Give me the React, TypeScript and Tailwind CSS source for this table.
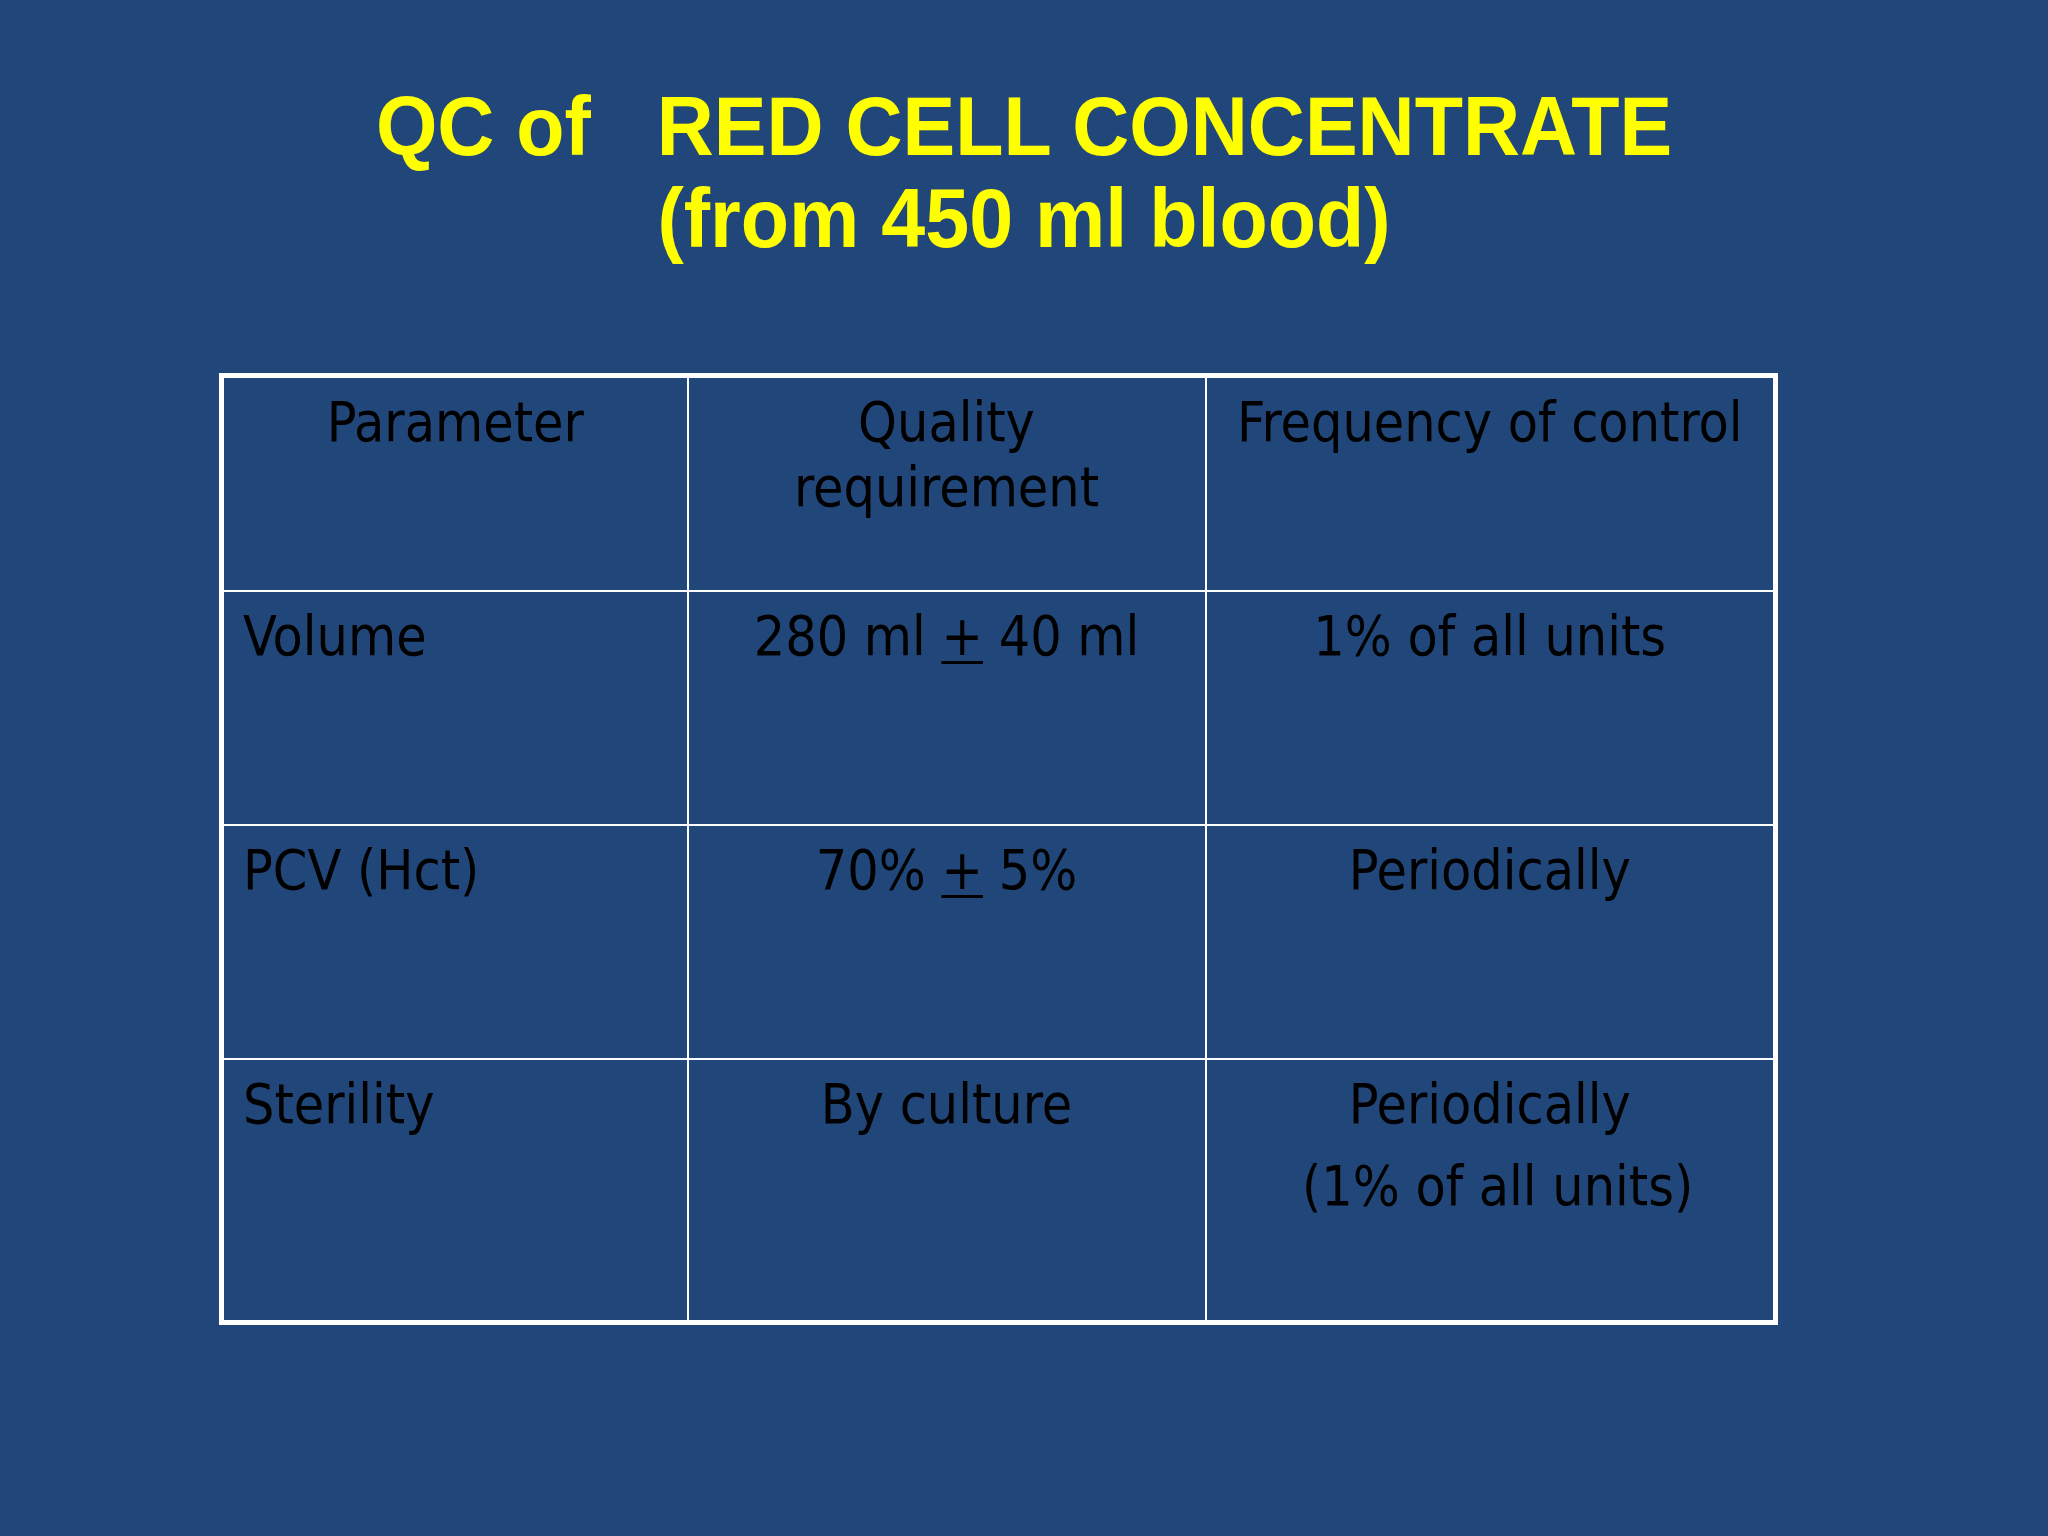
const rows = [
  { param: 'Volume', req: ['280 ml ', '+', ' 40 ml'], freq: ['1% of all units'], h: 'h-[234px]' },
  { param: 'PCV (Hct)', req: ['70% ', '+', ' 5%'], freq: ['Periodically'], h: 'h-[234px]' },
  { param: 'Sterility', req: ['By culture'], freq: ['Periodically', '\u00a0(1% of all units)'], h: 'h-[264px]' },
];

const cell = 'border-2 border-white align-top pt-[12px] px-[19px]';

const App = () => {
  return (
    <div className="w-[2048px] h-[1536px] bg-[#21477a] pt-[85px] font-['Liberation_Sans',Arial,sans-serif]">
      <h1 className="text-center text-[79px] leading-[87px] font-bold text-[#ffff00] whitespace-pre scale-y-[1.05]">
        {'QC of   RED CELL CONCENTRATE'}
        <br />
        {'(from 450 ml blood)'}
      </h1>

      <table className="ml-[219px] mt-[114px] border-collapse border-[5px] border-white text-black text-[55px] leading-[65px] font-['DejaVu_Sans_Condensed','DejaVu_Sans',sans-serif] [font-stretch:condensed]">
        <tbody>
          <tr className="h-[215px]">
            <td className={`${cell} w-[466px] text-center pt-[8px]`}>Parameter</td>
            <td className={`${cell} w-[518px] text-center pt-[8px]`}>
              Quality
              <br />
              requirement
            </td>
            <td className={`${cell} w-[570px] text-center pt-[8px] whitespace-nowrap`}>Frequency of control</td>
          </tr>
          {rows.map((r) => (
            <tr key={r.param} className={r.h}>
              <td className={`${cell} text-left`}>{r.param}</td>
              <td className={`${cell} text-center`}>
                {r.req.length === 3 ? (
                  <span className="whitespace-pre">
                    {r.req[0]}
                    <span className="underline decoration-[3px] underline-offset-[6px]">{r.req[1]}</span>
                    {r.req[2]}
                  </span>
                ) : (
                  r.req[0]
                )}
              </td>
              <td className={`${cell} text-center`}>
                {r.freq.map((f) => (
                  <div key={f} className="mb-[17px] last:mb-0 whitespace-pre">
                    {f}
                  </div>
                ))}
              </td>
            </tr>
          ))}
        </tbody>
      </table>
    </div>
  );
};

export default App;
